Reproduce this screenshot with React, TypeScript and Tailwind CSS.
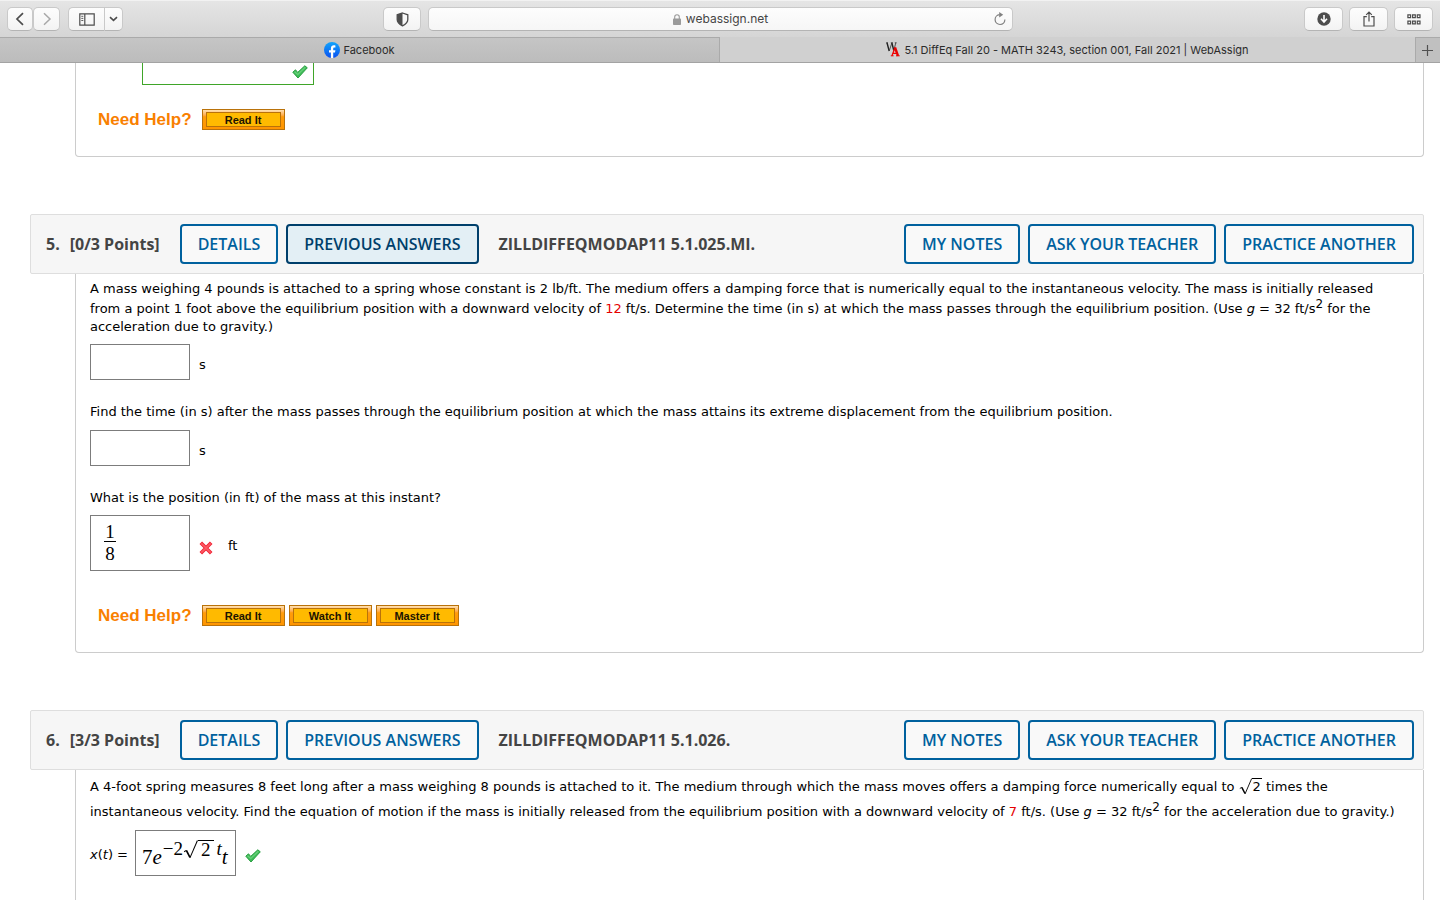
import type { ReactNode } from "react";

function ToolbarButton({ label, className, children }: { label: string; className: string; children: ReactNode }) {
  return (
    <button
      type="button"
      aria-label={label}
      className={`flex h-6 items-center justify-center rounded-[5px] border border-[#c9c9c9] border-b-[#b4b4b4] bg-linear-to-b from-[#fdfdfd] to-[#f3f3f3] text-[#4d4d4d] ${className}`}
    >
      {children}
    </button>
  );
}

function BrowserToolbar() {
  return (
    <div className="grid h-[37px] grid-cols-[428fr_585fr_427fr] items-center border-t border-[#f2f2f2] bg-linear-to-b from-[#e5e5e5] to-[#d5d5d5]">
      <div className="flex items-center px-[7px]">
        <ToolbarButton label="Back" className="w-[26px]">
          <svg width="10" height="14" viewBox="0 0 10 14" fill="none" stroke="currentColor" strokeWidth="1.7">
            <path d="M8 1.2 2 7l6 5.8" />
          </svg>
        </ToolbarButton>
        <ToolbarButton label="Forward" className="w-[27px]">
          <svg width="10" height="14" viewBox="0 0 10 14" fill="none" stroke="#a8a8a8" strokeWidth="1.5">
            <path d="M2 1.2 8 7l-6 5.8" />
          </svg>
        </ToolbarButton>
        <div className="ml-2 flex">
          <ToolbarButton label="Show sidebar" className="w-9 rounded-r-none border-r-0">
            <svg width="16" height="13" viewBox="0 0 16 13" fill="none" stroke="currentColor">
              <path d="M.8.8h14.4v11.4H.8zM5.8.8v11.4" strokeWidth="1.2" />
              <path d="M2.3 3.3h2M2.3 5.4h2M2.3 7.5h2" strokeWidth=".9" />
            </svg>
          </ToolbarButton>
          <ToolbarButton label="Sidebar options" className="w-[19px] rounded-l-none">
            <svg width="9" height="6" viewBox="0 0 9 6" fill="none" stroke="currentColor" strokeWidth="1.6">
              <path d="M1 1.2 4.5 4.4 8 1.2" />
            </svg>
          </ToolbarButton>
        </div>
        <ToolbarButton label="Privacy report" className="ml-auto w-[38px]">
          <svg width="13" height="15" viewBox="0 0 13 15">
            <path d="M6.5 1 11.8 2.8V7.6c0 3-2.4 4.9-5.3 6.3C3.6 12.5 1.2 10.6 1.2 7.6V2.8z" fill="none" stroke="currentColor" strokeWidth="1.3" />
            <path d="M6.5 1v12.9C3.6 12.5 1.2 10.6 1.2 7.6V2.8z" fill="currentColor" />
          </svg>
        </ToolbarButton>
      </div>

      <div className="flex h-6 items-center rounded-[5px] border border-[#c9c9c9] border-b-[#b4b4b4] bg-linear-to-b from-[#fdfdfd] to-[#f6f6f6] px-1">
        <span className="w-4" />
        <span className="flex flex-1 items-center justify-center gap-[5px] text-xs text-[#454545]">
          <svg width="8" height="11" viewBox="0 0 8 11">
            <rect x="0" y="4.5" width="8" height="6.5" rx=".8" fill="#9a9a9a" />
            <path d="M1.7 5V3.1a2.3 2.3 0 0 1 4.6 0V5" fill="none" stroke="#9a9a9a" strokeWidth="1.1" />
          </svg>
          webassign.net
        </span>
        <button type="button" aria-label="Reload" className="flex w-4 justify-center">
          <svg width="12" height="14" viewBox="0 0 12 14" fill="none">
            <path d="M5.6 2.7A4.9 4.9 0 1 0 10.9 7.6" stroke="#808080" strokeWidth="1.2" />
            <path d="M5.2 0 9.2 2.8 5.2 5.6z" fill="#808080" />
          </svg>
        </button>
      </div>

      <div className="flex items-center justify-end gap-1.5 pr-[7px]">
        <ToolbarButton label="Downloads" className="w-[39px]">
          <svg width="14" height="14" viewBox="0 0 14 14">
            <circle cx="7" cy="7" r="6.7" fill="currentColor" />
            <path d="M7 3v6.5M4 6.8l3 3.2 3-3.2" stroke="#fff" strokeWidth="1.6" fill="none" />
          </svg>
        </ToolbarButton>
        <ToolbarButton label="Share" className="w-[39px]">
          <svg width="12" height="16" viewBox="0 0 12 16" fill="none" stroke="currentColor" strokeWidth="1.2">
            <path d="M3.8 5.6H1v9.4h10V5.6H8.2M6 10.5V1.2M3.2 3.9 6 1.1l2.8 2.8" />
          </svg>
        </ToolbarButton>
        <ToolbarButton label="Tab overview" className="w-[39px]">
          <svg width="14" height="11" viewBox="0 0 14 11" fill="none" stroke="currentColor" strokeWidth="1.2">
            <path d="M.9.9h2.7v2.7H.9zM5.600.9h2.700v2.700H5.600zM10.300.9H13v2.700h-2.700zM.9 7.100h2.700v2.700H.9zM5.600 7.100h2.700v2.700H5.600zM10.300 7.100H13v2.700h-2.700z" />
          </svg>
        </ToolbarButton>
      </div>
    </div>
  );
}

function TabBar() {
  return (
    <div className="grid h-[26px] grid-cols-[720fr_695fr_25px] border-b border-[#a3a3a3] bg-[#d0d0d0] text-[11px] text-[#2b2b2b]">
      <button type="button" className="flex items-center justify-center gap-[3px] border-t border-r border-[#aaaaaa] bg-linear-to-b from-[#c5c5c5] to-[#bcbcbc]">
        <svg width="16" height="16" viewBox="0 0 16 16">
          <defs>
            <linearGradient id="fb" x1="0" y1="0" x2="0" y2="1">
              <stop offset="0" stopColor="#12a5fb" />
              <stop offset="1" stopColor="#0a4ff0" />
            </linearGradient>
          </defs>
          <circle cx="8" cy="8" r="8" fill="url(#fb)" />
          <path d="M6.9 16v-5.5H5V8.2h1.900V6.500c0-2.100 1.200-3.200 3-3.200.6 0 1.200.1 1.500.2v2h-1c-.9 0-1.200.5-1.200 1.100v1.600h2.200l-.4 2.300H9.200V16z" fill="#fff" />
        </svg>
        Facebook
      </button>
      <button type="button" className="flex items-center justify-center gap-1 border-t border-transparent">
        <svg width="14" height="16" viewBox="0 0 14 16" fill="none">
          <path d="M1 .8 3.200 9M5.800.8 7.800 8.500" stroke="#222" strokeWidth="1.400" />
          <path d="M3.200 9 5.900.8M7.800 8.500 9.800.8M0 .8h2M4.800.8h2M8.800.8h1.800" stroke="#333" strokeWidth=".8" />
          <path d="M6 13.800 9 5.500M7 11.300h4.500" stroke="#f00000" strokeWidth="1.300" />
          <path d="M9 5.500l3 8.300" stroke="#e80000" strokeWidth="2.400" />
          <path d="M4.800 13.800h2.800M10 13.800h3.700" stroke="#e80000" strokeWidth="1" />
        </svg>
        5.1 DiffEq Fall 20 - MATH 3243, section 001, Fall 2021 | WebAssign
      </button>
      <button type="button" aria-label="New tab" className="flex items-center justify-center border-t border-l border-[#aaaaaa] bg-[#c0c0c0] pr-0.5">
        <svg width="11" height="11" viewBox="0 0 11 11" stroke="#505050" strokeWidth="1.2">
          <path d="M5.5 0v11M0 5.500h11" />
        </svg>
      </button>
    </div>
  );
}

function CheckMark() {
  return (
    <svg width="16" height="14" viewBox="0 0 16 14" role="img" aria-label="Correct">
      <path d="M.8 7.200 3.500 4.800l2.200 2.600L12.800.8 15.300 2.800 6 13z" fill="#3fbc58" stroke="#2a9e42" strokeWidth="1" strokeLinejoin="round" />
      <path d="M2.500 6.800 5.800 9.500l7.500-7.200" stroke="#68d07a" strokeWidth="1.200" fill="none" />
    </svg>
  );
}

function CrossMark() {
  return (
    <svg width="14" height="14" viewBox="0 0 14 14" role="img" aria-label="Incorrect">
      <path d="M1.800 1.800l10.400 10.400M12.200 1.800 1.800 12.200" stroke="#f02234" strokeWidth="3.600" />
      <path d="M2.300 2.300l9.400 9.400M11.700 2.300 2.300 11.700" stroke="#fd5a64" strokeWidth="1.800" />
    </svg>
  );
}

function NeedHelp({ items }: { items: string[] }) {
  return (
    <div className="flex items-center pl-2 font-['Liberation_Sans',Arial,sans-serif]">
      <span className="mr-2.5 text-[17px] leading-5 font-bold text-[#f98000]">Need Help?</span>
      <div className="flex gap-1">
        {items.map((item) => (
          <button
            key={item}
            type="button"
            className="h-[21px] w-[83px] border border-[#b9720a] bg-linear-to-b from-[#ffe0b0] via-[#ff9d0a] via-35% to-[#ff9500] px-[3px] py-[2px]"
          >
            <span className="flex h-[15px] items-center justify-center border border-[#b9720a] bg-[#ffba00] text-[11px] leading-3 font-bold text-[#1c1400]">
              {item}
            </span>
          </button>
        ))}
      </div>
    </div>
  );
}

function ActionButton({ active = false, children }: { active?: boolean; children: ReactNode }) {
  return (
    <button
      type="button"
      className={`h-10 rounded-[4px] border-2 px-4 text-base font-semibold whitespace-nowrap ${
        active ? "border-[#003f6b] bg-[#e3eff5] text-[#003f6b]" : "border-[#00619e] bg-[#f9f9f9] text-[#00619e]"
      }`}
    >
      {children}
    </button>
  );
}

function QuestionHeader({ number, points, source, active = false }: { number: string; points: string; source: string; active?: boolean }) {
  return (
    <header className="flex h-[60px] items-center gap-2 rounded-[2px] border border-[#dedede] bg-[#f6f6f6] pr-[9px] pl-[15px] font-['Open_Sans',sans-serif] text-base font-bold text-[#444444]">
      <h2 className="mr-3 flex gap-2.5 whitespace-nowrap">
        <span>{number}</span>
        <span>[{points} Points]</span>
      </h2>
      <ActionButton>DETAILS</ActionButton>
      <ActionButton active={active}>PREVIOUS ANSWERS</ActionButton>
      <span className="ml-3 flex-1 whitespace-nowrap">{source}</span>
      <ActionButton>MY NOTES</ActionButton>
      <ActionButton>ASK YOUR TEACHER</ActionButton>
      <ActionButton>PRACTICE ANOTHER</ActionButton>
    </header>
  );
}

function Gravity() {
  return (
    <>
      (Use <i>g</i> = 32 ft/s<sup className="static align-[5px] text-xs leading-[13px]">2</sup> for the
    </>
  );
}

function AnswerField({ label }: { label: string }) {
  return (
    <label className="flex items-center gap-[9px]">
      <input type="text" aria-label={label} className="h-9 w-[100px] border border-[#7c7c7c] bg-white px-2" />
      <span className="pt-1.5">s</span>
    </label>
  );
}

function RadicalSign({ className }: { className: string }) {
  return (
    <svg viewBox="0 0 13 17" className={className} fill="none" stroke="#000">
      <path d="M.8 10.500 2.800 9.300" strokeWidth=".9" />
      <path d="M2.800 9.300 6 15.500" strokeWidth="1.500" />
      <path d="M6 16 12.700.5" strokeWidth=".9" />
    </svg>
  );
}

export default function App() {
  return (
    <div className="flex min-h-screen flex-col bg-white font-[Inter,sans-serif]">
      <div>
        <BrowserToolbar />
        <TabBar />
      </div>

      <main className="flex flex-1 flex-col pr-4 pl-[30px] font-['DejaVu_Sans',Verdana,sans-serif] text-[13px] leading-[18px] text-black">
        <section className="ml-[45px] rounded-b-[4px] border border-t-0 border-[#cccccc] px-3.5 pb-[26px]">
          <div className="ml-[52px] flex h-[22px] w-[172px] items-start border border-t-0 border-[#3fa529] pr-[5px]">
            <input type="text" aria-label="Answer" className="h-5 min-w-0 flex-1" />
            <span className="pt-0.5">
              <CheckMark />
            </span>
          </div>
          <div className="mt-6">
            <NeedHelp items={["Read It"]} />
          </div>
        </section>

        <section className="mt-[57px]">
          <QuestionHeader number="5." points="0/3" source="ZILLDIFFEQMODAP11 5.1.025.MI." active />
          <div className="ml-[45px] rounded-b-[4px] border border-t-0 border-[#cccccc] px-3.5 pt-1.5 pb-[26px]">
            <p className="whitespace-nowrap">
              A mass weighing 4 pounds is attached to a spring whose constant is 2 lb/ft. The medium offers a damping force that is numerically equal to the instantaneous velocity. The mass is initially released
              <br />
              from a point 1 foot above the equilibrium position with a downward velocity of <span className="text-[#e60000]">12</span> ft/s. Determine the time (in s) at which the mass passes through the equilibrium position. <Gravity />
              <br />
              acceleration due to gravity.)
            </p>
            <div className="mt-2">
              <AnswerField label="Time through equilibrium in seconds" />
            </div>
            <p className="mt-[23px]">
              Find the time (in s) after the mass passes through the equilibrium position at which the mass attains its extreme displacement from the equilibrium position.
            </p>
            <div className="mt-[9px]">
              <AnswerField label="Time of extreme displacement in seconds" />
            </div>
            <p className="mt-[23px]">What is the position (in ft) of the mass at this instant?</p>
            <div className="mt-2 flex items-center">
              <div role="math" aria-label="1/8" className="h-14 w-[100px] border border-[#7c7c7c] px-[13px] pt-1.5 font-['Liberation_Serif',serif] text-[19px] leading-5">
                <span className="flex w-3 flex-col items-center">
                  <span className="h-[19px]">1</span>
                  <span className="w-full border-t border-black pt-0.5 text-center">8</span>
                </span>
              </div>
              <span className="mt-2.5 ml-[9px]">
                <CrossMark />
              </span>
              <span className="mt-1.5 ml-[15px]">ft</span>
            </div>
            <div className="mt-[34px]">
              <NeedHelp items={["Read It", "Watch It", "Master It"]} />
            </div>
          </div>
        </section>

        <section className="mt-[57px] flex flex-1 flex-col">
          <QuestionHeader number="6." points="3/3" source="ZILLDIFFEQMODAP11 5.1.026." />
          <div className="ml-[45px] flex-1 border-x border-[#cccccc] px-3.5 pt-1">
            <p className="leading-[25px] whitespace-nowrap">
              A 4-foot spring measures 8 feet long after a mass weighing 8 pounds is attached to it. The medium through which the mass moves offers a damping force numerically equal to{" "}
              <RadicalSign className="inline h-[17px] w-[13px] align-[-4px]" />
              <span className="inline-block border-t border-black px-px leading-4">2</span> times the
              <br />
              instantaneous velocity. Find the equation of motion if the mass is initially released from the equilibrium position with a downward velocity of <span className="text-[#e60000]">7</span> ft/s. <Gravity /> acceleration due to gravity.)
            </p>
            <div className="mt-1.5 flex items-center">
              <span className="pt-1">
                <i>x</i>(<i>t</i>) =
              </span>
              <div role="math" aria-label="7e^(-2√2 t) t" className="ml-[7px] flex h-[46px] w-[101px] items-end border border-[#7c7c7c] pb-1 pl-1.5 font-['Liberation_Serif',serif] text-[21px] leading-7">
                <span>
                  7<i>e</i>
                </span>
                <span className="ml-px flex items-center pb-2 text-[19px]">
                  −2
                  <RadicalSign className="h-[19px] w-[15px]" />
                  <span className="border-t border-black px-[3px] leading-[18px]">2</span>
                  <i className="ml-[3px]">t</i>
                </span>
                <i>t</i>
              </div>
              <span className="mt-1.5 ml-[9px]">
                <CheckMark />
              </span>
            </div>
          </div>
        </section>
      </main>
    </div>
  );
}
